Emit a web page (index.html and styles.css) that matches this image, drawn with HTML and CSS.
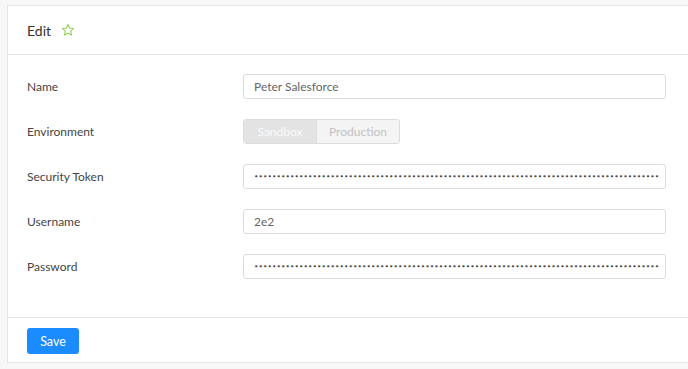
FILE: index.html
```html
<!DOCTYPE html>
<html>
<head>
<meta charset="utf-8">
<link rel="stylesheet" href="styles.css">
</head>
<body>
<div class="card">
  <div class="card-header">
    <span class="title">Edit</span>
    <svg class="star" width="14" height="14" viewBox="0 0 24 24"><path d="M12 2.5l2.9 6.1 6.6.8-4.9 4.6 1.3 6.6L12 17.3l-5.9 3.3 1.3-6.6-4.9-4.6 6.6-.8z" fill="none" stroke="#8fcf4f" stroke-width="1.8" stroke-linejoin="round"/></svg>
  </div>
  <div class="card-body">
    <div class="row">
      <label class="label">Name</label>
      <input class="field" type="text" value="Peter Salesforce" readonly>
    </div>
    <div class="row">
      <label class="label">Environment</label>
      <div class="segmented">
        <span class="seg active">Sandbox</span>
        <span class="seg">Production</span>
      </div>
    </div>
    <div class="row">
      <label class="label">Security Token</label>
      <div class="field dots">••••••••••••••••••••••••••••••••••••••••••••••••••••••••••••••••••••••••••••••••••••••••••</div>
    </div>
    <div class="row">
      <label class="label">Username</label>
      <input class="field" type="text" value="2e2" readonly>
    </div>
    <div class="row">
      <label class="label">Password</label>
      <div class="field dots">••••••••••••••••••••••••••••••••••••••••••••••••••••••••••••••••••••••••••••••••••••••••••</div>
    </div>
  </div>
  <div class="card-footer">
    <button class="btn">Save</button>
  </div>
</div>
</body>
</html>
```
FILE: styles.css
```css
html, body {
  margin: 0;
  padding: 0;
  background: #f7f7f7;
  font-family: Lato, "Open Sans", sans-serif;
  overflow: hidden;
}
.card {
  margin: 5px -20px 0 7px;
  background: #fff;
  border: 1px solid #e6e6e6;
}
.card-header {
  height: 48px;
  display: flex;
  align-items: center;
  padding-left: 19px;
  border-bottom: 1px solid #e6e6e6;
}
.title {
  font-size: 14px;
  color: #333;
  margin-right: 10px;
}
.star { display: block; margin-top: -1px; }
.card-body {
  padding: 19px 0 38px 19px;
  display: flex;
  flex-direction: column;
  gap: 20px;
}
.row {
  display: grid;
  grid-template-columns: 216px 423px;
  align-items: center;
  height: 25px;
}
.label {
  font-size: 12px;
  color: #444;
  margin-top: -1px;
}
.field {
  box-sizing: border-box;
  height: 25px;
  width: 423px;
  border: 1px solid #dcdcdc;
  border-radius: 3px;
  padding: 0 10px;
  font-family: Lato, "Open Sans", sans-serif;
  font-size: 12px;
  color: #666;
  background: #fff;
  outline: none;
  margin: 0;
}
.dots {
  white-space: nowrap;
  line-height: 23px;
  padding-right: 4px;
  font-family: "DejaVu Sans", sans-serif;
  font-size: 7.5px;
  letter-spacing: 0.08px;
  color: #444;
}
.segmented {
  display: flex;
  width: 157px;
  height: 25px;
  box-sizing: border-box;
  border: 1px solid #dcdcdc;
  border-radius: 3px;
  overflow: hidden;
}
.seg {
  flex: 1;
  display: flex;
  align-items: center;
  justify-content: center;
  font-size: 12px;
  color: #c2c2c2;
  background: #f4f4f4;
}
.seg.active {
  flex: 0 0 72px;
  background: #e3e3e3;
  color: #fafafa;
  border-right: 1px solid #dcdcdc;
}
.card-footer {
  border-top: 1px solid #e6e6e6;
  padding: 10px 0 8px 19px;
}
.btn {
  width: 52px;
  height: 26px;
  border: none;
  border-radius: 3px;
  background: #1a8cff;
  color: #fff;
  font-family: Lato, "Open Sans", sans-serif;
  font-size: 12.5px;
  padding: 0;
  display: block;
}
```
